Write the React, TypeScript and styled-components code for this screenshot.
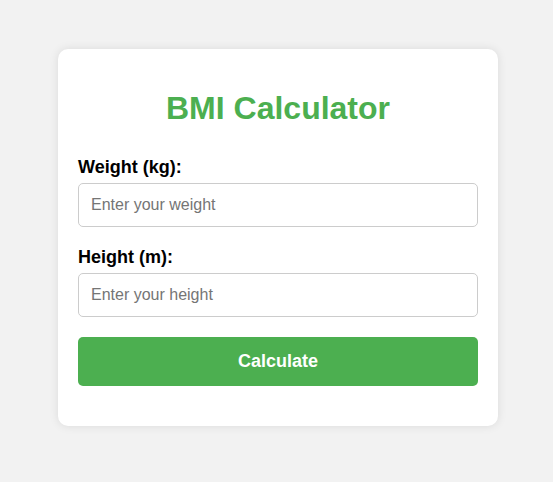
import React from 'react';
import styled, { createGlobalStyle } from 'styled-components';

const GlobalStyle = createGlobalStyle`
  body {
    margin: 0;
    background: #f2f2f2;
    font-family: Arial, "Liberation Sans", sans-serif;
  }
`;

const Page = styled.div`
  display: flex;
  justify-content: center;
  align-items: flex-start;
  padding: 49px 0 0 3px;
  height: 482px;
  box-sizing: border-box;
`;

const Card = styled.div`
  width: 440px;
  box-sizing: border-box;
  background: #fff;
  border-radius: 10px;
  box-shadow: 0 0 10px rgba(0, 0, 0, 0.1);
  padding: 20px 20px 40px;
  display: flex;
  flex-direction: column;
`;

const Title = styled.h1`
  margin: 21px 0 30px;
  font-size: 32px;
  line-height: 37px;
  text-align: center;
  color: #4caf50;
`;

const Label = styled.label`
  display: block;
  font-size: 18px;
  line-height: 21px;
  font-weight: bold;
  color: #000;
  margin-bottom: 5px;
`;

const Input = styled.input`
  box-sizing: border-box;
  width: 100%;
  height: 44px;
  padding: 12px;
  font-size: 16px;
  font-family: inherit;
  border: 1px solid #ccc;
  border-radius: 5px;
  margin-bottom: 20px;

  &::placeholder {
    color: #757575;
  }
`;

const Button = styled.button`
  width: 100%;
  height: 49px;
  border: none;
  border-radius: 5px;
  background: #4caf50;
  color: #fff;
  font-family: inherit;
  font-size: 18px;
  font-weight: bold;
  cursor: pointer;
`;

export default function App() {
  return (
    <>
      <GlobalStyle />
      <Page>
        <Card>
          <Title>BMI Calculator</Title>
          <Label htmlFor="weight">Weight (kg):</Label>
          <Input id="weight" type="number" placeholder="Enter your weight" />
          <Label htmlFor="height">Height (m):</Label>
          <Input id="height" type="number" placeholder="Enter your height" />
          <Button>Calculate</Button>
        </Card>
      </Page>
    </>
  );
}
